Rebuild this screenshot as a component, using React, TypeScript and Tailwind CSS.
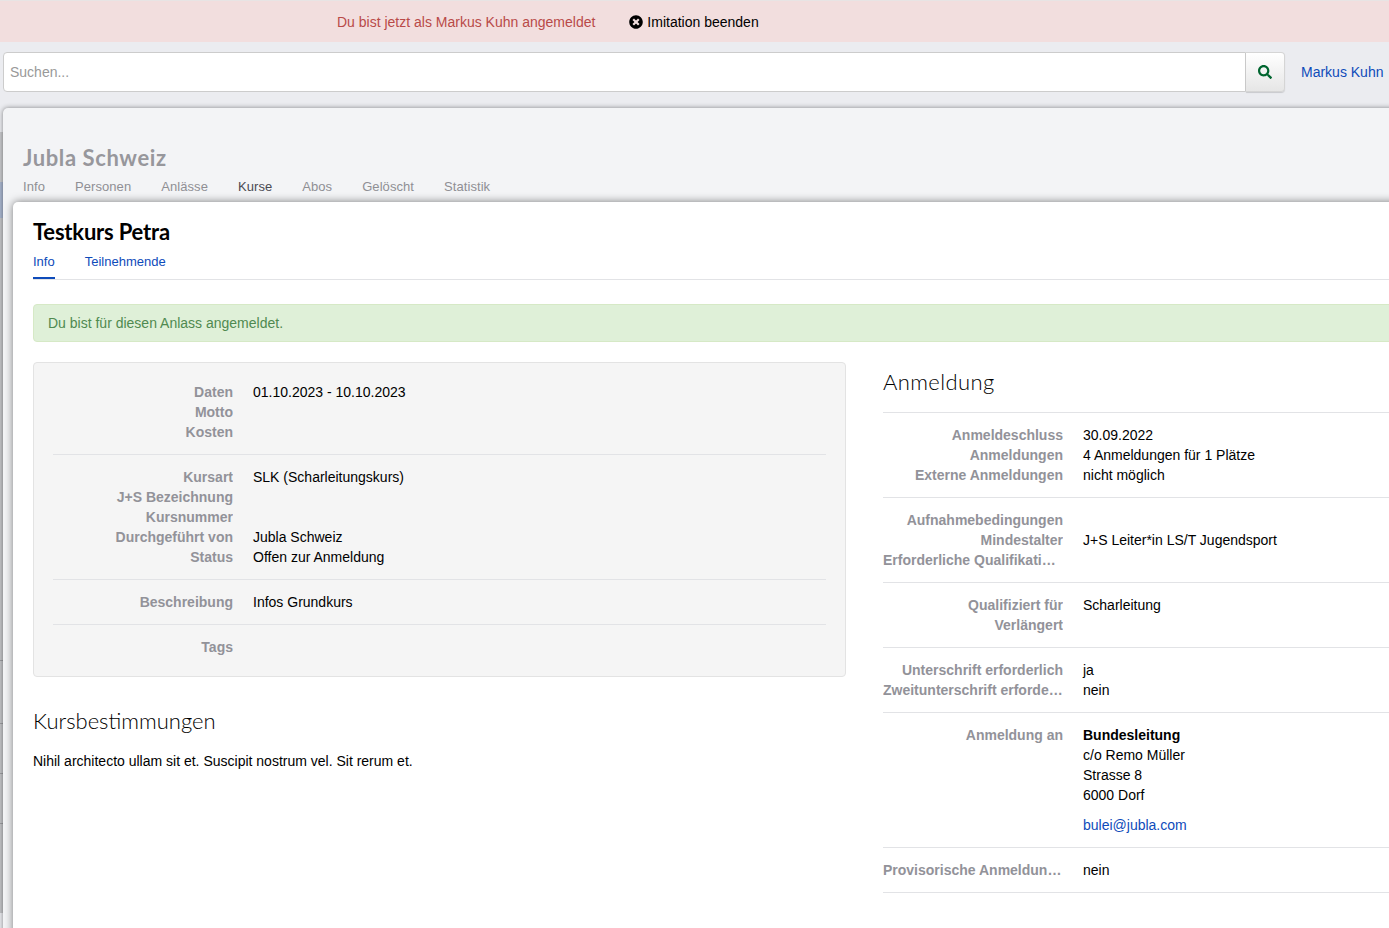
import { FaSearch, FaTimesCircle } from 'react-icons/fa';

interface Row {
  label: string;
  value?: string;
}

const groupTabs = ['Info', 'Personen', 'Anlässe', 'Kurse', 'Abos', 'Gelöscht', 'Statistik'];

const leftSections: Row[][] = [
  [{ label: 'Daten', value: '01.10.2023 - 10.10.2023' }, { label: 'Motto' }, { label: 'Kosten' }],
  [
    { label: 'Kursart', value: 'SLK (Scharleitungskurs)' },
    { label: 'J+S Bezeichnung' },
    { label: 'Kursnummer' },
    { label: 'Durchgeführt von', value: 'Jubla Schweiz' },
    { label: 'Status', value: 'Offen zur Anmeldung' },
  ],
  [{ label: 'Beschreibung', value: 'Infos Grundkurs' }],
  [{ label: 'Tags' }],
];

const rightSections: Row[][] = [
  [
    { label: 'Anmeldeschluss', value: '30.09.2022' },
    { label: 'Anmeldungen', value: '4 Anmeldungen für 1 Plätze' },
    { label: 'Externe Anmeldungen', value: 'nicht möglich' },
  ],
  [
    { label: 'Aufnahmebedingungen' },
    { label: 'Mindestalter', value: 'J+S Leiter*in LS/T Jugendsport' },
    { label: 'Erforderliche Qualifikationen' },
  ],
  [{ label: 'Qualifiziert für', value: 'Scharleitung' }, { label: 'Verlängert' }],
  [
    { label: 'Unterschrift erforderlich', value: 'ja' },
    { label: 'Zweitunterschrift erforderlich', value: 'nein' },
  ],
];

const stripSegments = [
  'h-[25px] bg-[#ebecf0]',
  'h-[50px] bg-[#c9cacd]',
  'h-[36px] bg-[#a9b6cf]',
  'h-[442px] bg-[#c4c5c9]',
  'h-[63px] bg-[#c4c5c9] border-t border-[#9d9ea2]',
  'h-[50px] bg-[#c4c5c9] border-t border-[#9d9ea2]',
  'h-[50px] bg-[#c4c5c9] border-t border-[#9d9ea2]',
  'h-[90px] bg-[#c4c5c9] border-t border-[#9d9ea2]',
];

function InfoRow({ label, children }: { label: string; children?: React.ReactNode }) {
  return (
    <div className="flex gap-5">
      <div className="w-[180px] shrink-0 truncate text-right font-bold text-[#929299]">{label}</div>
      <div className="min-w-0 flex-1 text-black">{children}</div>
    </div>
  );
}

function Section({ rows }: { rows: Row[] }) {
  return (
    <div>
      {rows.map((row) => (
        <InfoRow key={row.label} label={row.label}>
          {row.value}
        </InfoRow>
      ))}
    </div>
  );
}

const headingFont = "font-['Lato',sans-serif]";

export default function App() {
  return (
    <div className="h-[928px] w-full overflow-hidden bg-[#ebecf0] font-['Liberation_Sans',Arial,sans-serif] text-sm leading-5 text-black">
      {/* Imitation banner */}
      <div className="flex h-[42px] items-center border-t border-[#e8e4e4] bg-[#f2dede] pl-[337px]">
        <span className="text-[#b94a48]">Du bist jetzt als Markus Kuhn angemeldet</span>
        <a className="ml-[34px] flex items-center gap-[4px] text-black">
          <FaTimesCircle className="h-[14px] w-[14px]" />
          Imitation beenden
        </a>
      </div>

      {/* Search */}
      <div className="mt-[10px] flex items-center pl-[3px]">
        <div className="flex h-10 w-[1282px]">
          <input
            placeholder="Suchen..."
            className="h-10 flex-1 rounded-l border border-[#ccc] bg-white px-[6px] text-sm text-black outline-none placeholder:text-[#999]"
          />
          <button className="flex h-10 w-[39px] items-center justify-center rounded-r border border-l-0 border-[#d5d5d5] bg-gradient-to-b from-white to-[#e6e6e6] shadow-[0_1px_1px_rgba(0,0,0,0.15)]">
            <FaSearch className="h-[14px] w-[14px] text-[#00652f]" />
          </button>
        </div>
        <a className="ml-4 whitespace-nowrap text-[#0e4bba]">Markus Kuhn</a>
      </div>

      <div className="mt-[15px] flex">
        <div className="flex w-[3px] shrink-0 flex-col">
          {stripSegments.map((segment, i) => (
            <div key={i} className={segment} />
          ))}
        </div>

        {/* Group panel */}
        <div className="mt-px w-[1500px] shrink-0 rounded-tl-[5px] bg-[#f3f4f6] pl-[10px] pt-[37px] shadow-[0_0_5px_rgba(0,0,0,0.45)]">
          <div className="pl-[10px]">
            <h1 className={`${headingFont} text-[22px] leading-[26px] font-bold tracking-[0.6px] text-[#97979c]`}>Jubla Schweiz</h1>
            <nav className="mt-[6px] flex h-[25px] gap-[30px] text-[13px] leading-5 tracking-[0.07px] text-[#8f8f94]">
              {groupTabs.map((tab) => (
                <a key={tab} className={tab === 'Kurse' ? 'text-[#4a4a52]' : ''}>
                  {tab}
                </a>
              ))}
            </nav>
          </div>

          {/* Course card */}
          <div className="h-[800px] rounded-tl-[5px] bg-white pl-5 pt-[16px] shadow-[0_0_8px_rgba(0,0,0,0.5)]">
            <h2 className={`${headingFont} text-[22px] leading-[28px] font-bold tracking-[-0.2px] text-black`}>Testkurs Petra</h2>
            <div className="mt-[6px] flex h-[28px] gap-[30px] border-b border-[#e2e3e6] text-[13px] leading-5">
              <a className="h-[27px] border-b-2 border-[#0e4bba] text-[#0e4bba]">Info</a>
              <a className="text-[#0e4bba]">Teilnehmende</a>
            </div>

            <div className="mt-6 flex h-[38px] items-center rounded border border-[#d6e9c6] bg-[#dff0d8] px-[14px] text-[#4f8a50]">
              Du bist für diesen Anlass angemeldet.
            </div>

            <div className="mt-5 flex items-start gap-[37px]">
              <div className="w-[813px] shrink-0">
                <div className="flex flex-col gap-3 rounded border border-[#e3e3e3] bg-[#f5f5f5] px-[19px] py-[19px]">
                  {leftSections.map((rows, i) => (
                    <div key={i} className={i < leftSections.length - 1 ? 'border-b border-[#e2e3e6] pb-3' : ''}>
                      <Section rows={rows} />
                    </div>
                  ))}
                </div>

                <h3 className={`${headingFont} mt-[29px] text-[22px] leading-[30px] font-light text-black`}>Kursbestimmungen</h3>
                <p className="mt-[15px]">Nihil architecto ullam sit et. Suscipit nostrum vel. Sit rerum et.</p>
              </div>

              <div className="min-w-0 flex-1">
                <h3 className={`${headingFont} mt-[5px] text-[22px] leading-[30px] font-light tracking-[0.4px] text-black`}>Anmeldung</h3>
                <div className="mt-[15px] border-t border-[#e2e3e6]">
                  {rightSections.map((rows, i) => (
                    <div key={i} className="border-b border-[#e2e3e6] py-3">
                      <Section rows={rows} />
                    </div>
                  ))}
                  <div className="border-b border-[#e2e3e6] py-3">
                    <InfoRow label="Anmeldung an">
                      <strong>Bundesleitung</strong>
                      <br />
                      c/o Remo Müller
                      <br />
                      Strasse 8
                      <br />
                      6000 Dorf
                      <a className="mt-[10px] block text-[#0e4bba]">bulei@jubla.com</a>
                    </InfoRow>
                  </div>
                  <div className="border-b border-[#e2e3e6] py-3">
                    <InfoRow label="Provisorische Anmeldungen">nein</InfoRow>
                  </div>
                </div>
              </div>
            </div>
          </div>
        </div>
      </div>
    </div>
  );
}
